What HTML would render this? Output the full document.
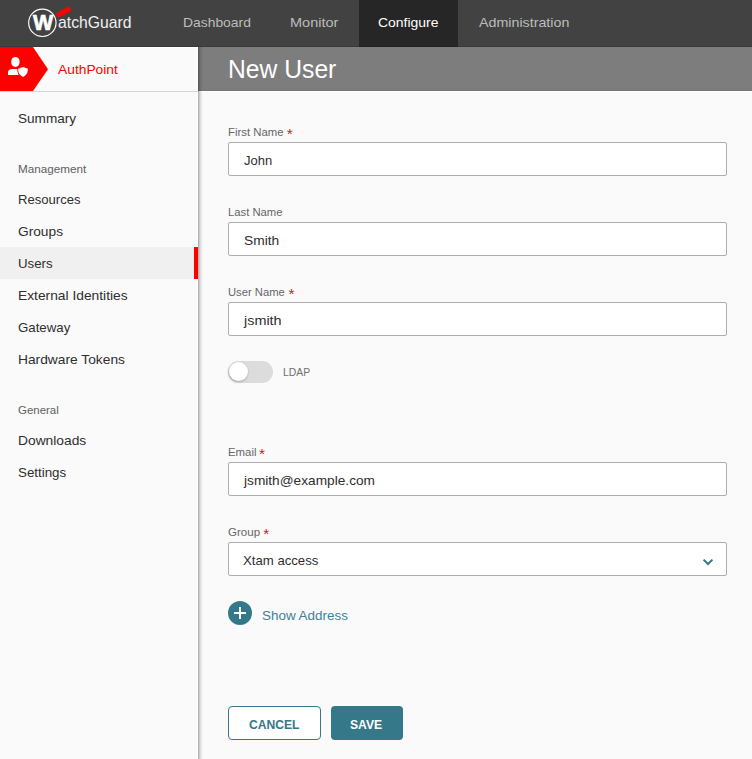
<!DOCTYPE html>
<html lang="en">
<head>
<meta charset="utf-8">
<title>New User - AuthPoint</title>
<style>
*{box-sizing:border-box;margin:0;padding:0}
html,body{width:752px;height:759px;overflow:hidden;background:#fafafa;font-family:"Liberation Sans","DejaVu Sans",sans-serif;color:#222}
.abs{position:absolute}
.tx{position:absolute;white-space:pre;line-height:normal;transform-origin:0 0}
#logoW{-webkit-text-stroke:0.7px #fff}
.star{position:absolute;white-space:pre;line-height:normal;font-size:15.5px;color:#c81e1e}
#top{position:absolute;left:0;top:0;width:752px;height:47px;background:#424242;border-bottom:1px solid #393939}
#tabon{position:absolute;left:359px;top:0;width:99px;height:47px;background:#262626;border-bottom:1px solid #202020}
#side{position:absolute;left:0;top:47px;width:198px;height:712px;background:#fafafa;border-right:1px solid #fff}
#sideline{position:absolute;left:0;top:91px;width:198px;height:1px;background:#d6d6d6}
#title{position:absolute;left:198px;top:47px;width:554px;height:44px;background:#7d7d7d;border-bottom:1px solid #757575}
#ring1{position:absolute;left:0;top:47px;width:198px;height:1px;background:#fff}
#ring2{position:absolute;left:201px;top:91px;width:551px;height:1px;background:#fff}
#shadow{position:absolute;left:198px;top:47px;width:5px;height:712px;background:linear-gradient(to right,rgba(0,0,0,.34),rgba(0,0,0,.13) 40%,rgba(0,0,0,0))}
#active{position:absolute;left:0;top:247px;width:198px;height:32px;background:#f0f0f0}
#activebar{position:absolute;left:194px;top:247px;width:4px;height:32px;background:#f00}
.inp{position:absolute;left:228px;width:499px;height:34px;border:1px solid #aeaeae;border-radius:2px;background:#fff}
</style>
</head>
<body>
<div id="top"></div>
<div id="tabon"></div>
<svg class="abs" style="left:0;top:0" width="160" height="47" viewBox="0 0 160 47">
  <circle cx="42.35" cy="22.75" r="13.7" fill="none" stroke="#fff" stroke-width="1.15"/>
  <line x1="59" y1="14.5" x2="68.1" y2="9.8" stroke="#f00" stroke-width="5.2" stroke-linecap="round"/>
</svg>

<div id="side"></div>
<div id="sideline"></div>
<div id="ring1"></div>
<svg class="abs" style="left:0;top:47px" width="50" height="44" viewBox="0 0 50 44">
  <path d="M0 0 H33 L48 22.3 L33 44 H0 Z" fill="#f00"/>
  <ellipse cx="15.4" cy="14.9" rx="4.2" ry="5" fill="#fff"/>
  <path d="M8 28 V25.6 Q8 22 12.6 22 H18.5 V28 Z" fill="#fff"/>
  <path d="M23 20.1 L27.9 21.8 Q27.9 27.8 23 29.9 Q18.1 27.8 18.1 21.8 Z" fill="#fff" stroke="#f00" stroke-width="1.8" paint-order="stroke"/>
</svg>
<div id="active"></div><div id="activebar"></div>

<div id="title"></div>
<div id="shadow"></div>
<div id="ring2"></div>

<div class="inp" style="top:142px"></div>
<div class="inp" style="top:222px"></div>
<div class="inp" style="top:302px"></div>
<div class="inp" style="top:462px"></div>
<div class="inp" style="top:542px"></div>

<div class="abs" id="toggle" style="left:228px;top:361px;width:45px;height:22px;border-radius:11px;background:#dcdcdc"></div>
<div class="abs" id="knob" style="left:229px;top:362px;width:19px;height:19px;border-radius:10px;background:#fff;box-shadow:-0.5px 1px 3px rgba(0,0,0,.28)"></div>

<svg class="abs" style="left:700px;top:556px" width="16" height="12" viewBox="0 0 16 12"><path d="M3.6 3.6 L8 8 L12.4 3.6" fill="none" stroke="#35788a" stroke-width="2" stroke-linecap="butt" stroke-linejoin="miter"/></svg>

<svg class="abs" style="left:228px;top:601px" width="24" height="24" viewBox="0 0 24 24"><circle cx="12" cy="12" r="12" fill="#35788a"/><path d="M12 6 V18 M6 12 H18" stroke="#fff" stroke-width="2"/></svg>

<div class="abs" id="cancelbox" style="left:228px;top:706px;width:93px;height:34px;border:1px solid #35788a;border-radius:4px;background:#fff"></div>
<div class="abs" id="savebox" style="left:331px;top:706px;width:72px;height:34px;border-radius:4px;background:#35788a"></div>


<!--TEXT-->
<div class="tx" id="logoW" style="left:33.20px;top:10px;font-size:21.9px;color:#ffffff;font-weight:bold;transform:translateY(0.30px) scaleX(0.9783)">W</div>
<div class="tx" id="logotext" style="left:57.77px;top:13px;font-size:16.2px;color:#f0f0f0;transform:translateY(-0.20px) scaleX(0.9736)">atchGuard</div>
<div class="tx" id="t1" style="left:182.98px;top:15px;font-size:13.6px;color:#bdbdbd;transform:translateY(0.00px) scaleX(1.0208)">Dashboard</div>
<div class="tx" id="t2" style="left:290.43px;top:15px;font-size:13.6px;color:#bdbdbd;transform:translateY(0.00px) scaleX(1.0667)">Monitor</div>
<div class="tx" id="t3" style="left:378.23px;top:15px;font-size:13.6px;color:#ffffff;transform:translateY(0.00px) scaleX(1.0261)">Configure</div>
<div class="tx" id="t4" style="left:478.80px;top:15px;font-size:13.6px;color:#bdbdbd;transform:translateY(0.00px) scaleX(1.0487)">Administration</div>
<div class="tx" id="authpoint" style="left:58.00px;top:62px;font-size:13.5px;color:#ff0000;transform:translateY(-0.30px) scaleX(1.0222)">AuthPoint</div>
<div class="tx" id="ttxt" style="left:228.12px;top:55px;font-size:24.9px;color:#ffffff;transform:translateY(-0.40px) scaleX(0.9916)">New User</div>
<div class="tx" id="n1" style="left:18.10px;top:111px;font-size:13.5px;color:#2e2e2e;transform:translateY(0.00px) scaleX(1.0061)">Summary</div>
<div class="tx" id="s1" style="left:17.97px;top:163px;font-size:11.4px;color:#606060;transform:translateY(0.40px) scaleX(1.0260)">Management</div>
<div class="tx" id="n2" style="left:18.13px;top:192px;font-size:13.5px;color:#2e2e2e;transform:translateY(0.00px) scaleX(0.9698)">Resources</div>
<div class="tx" id="n3" style="left:17.94px;top:224px;font-size:13.5px;color:#2e2e2e;transform:translateY(0.00px) scaleX(1.0163)">Groups</div>
<div class="tx" id="n4" style="left:18.12px;top:256px;font-size:13.5px;color:#2e2e2e;transform:translateY(0.00px) scaleX(0.9837)">Users</div>
<div class="tx" id="n5" style="left:18.08px;top:288px;font-size:13.5px;color:#2e2e2e;transform:translateY(0.00px) scaleX(1.0213)">External Identities</div>
<div class="tx" id="n6" style="left:17.96px;top:320px;font-size:13.5px;color:#2e2e2e;transform:translateY(0.00px) scaleX(0.9810)">Gateway</div>
<div class="tx" id="n7" style="left:18.08px;top:352px;font-size:13.5px;color:#2e2e2e;transform:translateY(0.00px) scaleX(1.0208)">Hardware Tokens</div>
<div class="tx" id="s2" style="left:18.20px;top:404px;font-size:11.4px;color:#606060;transform:translateY(0.00px) scaleX(1.0064)">General</div>
<div class="tx" id="n8" style="left:18.08px;top:433px;font-size:13.5px;color:#2e2e2e;transform:translateY(0.00px) scaleX(1.0222)">Downloads</div>
<div class="tx" id="n9" style="left:18.11px;top:465px;font-size:13.5px;color:#2e2e2e;transform:translateY(0.00px) scaleX(0.9885)">Settings</div>
<div class="tx" id="l1" style="left:228.17px;top:126px;font-size:11px;color:#666666;transform:translateY(0.00px) scaleX(1.0335)">First Name</div>
<div class="tx" id="i1" style="left:243.66px;top:153px;font-size:13.5px;color:#2e2e2e;transform:translateY(0.00px) scaleX(0.9628)">John</div>
<div class="tx" id="l2" style="left:228.18px;top:206px;font-size:11px;color:#666666;transform:translateY(0.00px) scaleX(1.0242)">Last Name</div>
<div class="tx" id="i2" style="left:243.99px;top:233px;font-size:13.5px;color:#2e2e2e;transform:translateY(0.00px) scaleX(1.0195)">Smith</div>
<div class="tx" id="l3" style="left:228.33px;top:286px;font-size:11px;color:#666666;transform:translateY(0.00px) scaleX(1.0220)">User Name</div>
<div class="tx" id="i3" style="left:244.17px;top:313px;font-size:13.5px;color:#2e2e2e;transform:translateY(0.00px) scaleX(1.0676)">jsmith</div>
<div class="tx" id="ldap" style="left:283.27px;top:366px;font-size:11.2px;color:#707070;transform:translateY(0.00px) scaleX(0.9297)">LDAP</div>
<div class="tx" id="l4" style="left:228.16px;top:446px;font-size:11px;color:#666666;transform:translateY(0.00px) scaleX(1.0369)">Email</div>
<div class="tx" id="i4" style="left:244.15px;top:473px;font-size:13.5px;color:#2e2e2e;transform:translateY(0.00px) scaleX(1.0136)">jsmith@example.com</div>
<div class="tx" id="l5" style="left:228.28px;top:526px;font-size:11px;color:#666666;transform:translateY(0.00px) scaleX(1.0487)">Group</div>
<div class="tx" id="i5" style="left:243.26px;top:553px;font-size:13.5px;color:#2e2e2e;transform:translateY(0.00px) scaleX(0.9752)">Xtam access</div>
<div class="tx" id="showaddr" style="left:262.00px;top:608px;font-size:13.5px;color:#3a8298;transform:translateY(0.00px) scaleX(0.9947)">Show Address</div>
<div class="tx" id="cancel" style="left:249.15px;top:717px;font-size:13.6px;color:#35788a;font-weight:bold;transform:translateY(0.00px) scaleX(0.8915)">CANCEL</div>
<div class="tx" id="save" style="left:350.45px;top:716px;font-size:13.6px;color:#ffffff;font-weight:bold;transform:translateY(0.50px) scaleX(0.8943)">SAVE</div>
<div class="star" style="left:286.70px;top:125px">*</div>
<div class="star" style="left:288.50px;top:285px">*</div>
<div class="star" style="left:258.90px;top:445px">*</div>
<div class="star" style="left:263.20px;top:525px">*</div>
<!--/TEXT-->
</body>
</html>
